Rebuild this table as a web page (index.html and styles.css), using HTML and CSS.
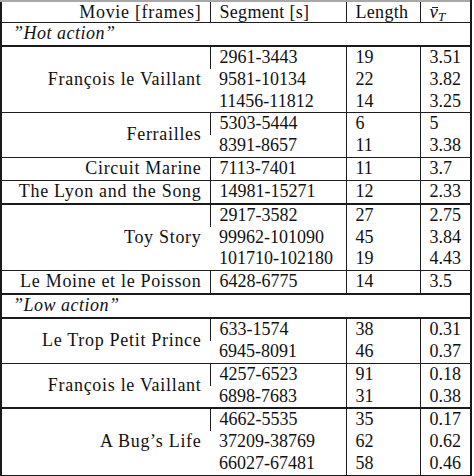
FILE: index.html
```html
<!DOCTYPE html>
<html>
<head>
<meta charset="utf-8">
<link rel="stylesheet" href="styles.css">
</head>
<body>
<table class="tbl">
  <colgroup>
    <col class="c1"><col class="c2"><col class="c3"><col class="c4">
  </colgroup>
  <thead>
    <tr class="head">
      <td class="movie">Movie [frames]</td>
      <td class="txt">Segment [s]</td>
      <td class="txt">Length</td>
      <td><span class="vbar"><i>v</i></span><sub class="sub">T</sub></td>
    </tr>
  </thead>
  <tbody class="grp thin">
    <tr><td colspan="4" class="section">”Hot action”</td></tr>
  </tbody>
  <tbody class="grp thick">
    <tr><td rowspan="3" class="movie">François le Vaillant</td><td>2961-3443</td><td>19</td><td>3.51</td></tr>
    <tr><td>9581-10134</td><td>22</td><td>3.82</td></tr>
    <tr><td>11456-11812</td><td>14</td><td>3.25</td></tr>
  </tbody>
  <tbody class="grp thin">
    <tr><td rowspan="2" class="movie">Ferrailles</td><td>5303-5444</td><td>6</td><td>5</td></tr>
    <tr><td>8391-8657</td><td>11</td><td>3.38</td></tr>
  </tbody>
  <tbody class="grp thin">
    <tr><td class="movie">Circuit Marine</td><td>7113-7401</td><td>11</td><td>3.7</td></tr>
  </tbody>
  <tbody class="grp thin">
    <tr><td class="movie">The Lyon and the Song</td><td>14981-15271</td><td>12</td><td>2.33</td></tr>
  </tbody>
  <tbody class="grp thick">
    <tr><td rowspan="3" class="movie">Toy Story</td><td>2917-3582</td><td>27</td><td>2.75</td></tr>
    <tr><td>99962-101090</td><td>45</td><td>3.84</td></tr>
    <tr><td>101710-102180</td><td>19</td><td>4.43</td></tr>
  </tbody>
  <tbody class="grp thin">
    <tr><td class="movie">Le Moine et le Poisson</td><td>6428-6775</td><td>14</td><td>3.5</td></tr>
  </tbody>
  <tbody class="grp thick">
    <tr><td colspan="4" class="section">”Low action”</td></tr>
  </tbody>
  <tbody class="grp thick">
    <tr><td rowspan="2" class="movie">Le Trop Petit Prince</td><td>633-1574</td><td>38</td><td>0.31</td></tr>
    <tr><td>6945-8091</td><td>46</td><td>0.37</td></tr>
  </tbody>
  <tbody class="grp thin">
    <tr><td rowspan="2" class="movie">François le Vaillant</td><td>4257-6523</td><td>91</td><td>0.18</td></tr>
    <tr><td>6898-7683</td><td>31</td><td>0.38</td></tr>
  </tbody>
  <tbody class="grp thick last">
    <tr><td rowspan="3" class="movie">A Bug’s Life</td><td>4662-5535</td><td>35</td><td>0.17</td></tr>
    <tr><td>37209-38769</td><td>62</td><td>0.62</td></tr>
    <tr><td>66027-67481</td><td>58</td><td>0.46</td></tr>
  </tbody>
</table>
</body>
</html>
```
FILE: styles.css
```css
html, body {
  margin: 0;
  padding: 0;
  background: #ffffff;
}
body {
  font-family: "Liberation Serif", "Times New Roman", serif;
  font-size: 18px;
  color: #111111;
}
.tbl {
  border-collapse: collapse;
  width: 472px;
  table-layout: fixed;
  border-left: 2px solid #1a1a1a;
  border-right: 2px solid #1a1a1a;
  border-top: 2px solid #a8a8a8;
}
.c1 { width: 209px; }
.c2 { width: 136px; }
.c3 { width: 74px; }
.c4 { width: 51px; }
.tbl td {
  font-family: "Liberation Serif", "Times New Roman", serif;
  padding: 0 8px 0 9px;
  line-height: 21.85px;
  height: 21.85px;
  white-space: nowrap;
  border-left: 1.5px solid #1e1e1e;
  vertical-align: middle;
}
.tbl td:first-child { border-left: none; }
.tbl td.movie {
  text-align: right;
  letter-spacing: 0.7px;
  padding-right: 8px;
}
.head td { height: 19px; line-height: 19px; }
.txt { letter-spacing: 0.3px; }
.grp.thin { border-top: 1.5px solid #1e1e1e; }
.grp.thick { border-top: 2px solid #1a1a1a; }
.grp.last { border-bottom: 2px solid #1a1a1a; }
.tbl td.section {
  font-style: italic;
  text-align: left;
  padding-left: 11px;
  letter-spacing: 0.5px;
}
.vbar {
  position: relative;
  display: inline-block;
  font-size: 19px;
}
.vbar::before {
  content: "";
  position: absolute;
  left: 2px;
  right: 0;
  top: 5px;
  border-top: 1px solid #222;
}
.sub {
  font-style: italic;
  font-size: 13px;
  vertical-align: -3px;
  line-height: 0;
}
```
